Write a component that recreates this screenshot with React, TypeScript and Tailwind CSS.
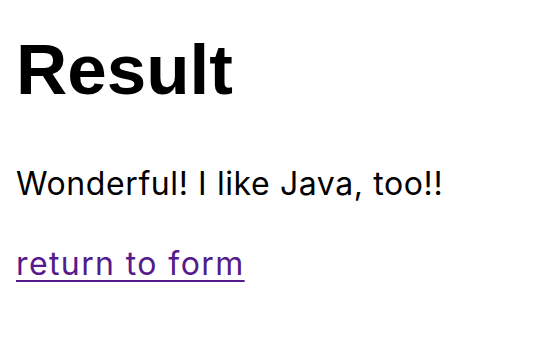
import React from 'react';

export default function App() {
  return (
    <div className="flex min-h-screen flex-col items-start bg-white px-4 pt-[31px] font-['Liberation_Sans',Arial,sans-serif] text-black">
      <h1 className="text-[71px] font-bold leading-[78px]">Result</h1>
      <p className="mt-[57px] font-['Inter','Liberation_Sans',sans-serif] text-[32px] leading-[36px] tracking-[0.6px]">Wonderful! I like Java, too!!</p>
      <p className="mt-[44px] font-['Inter','Liberation_Sans',sans-serif] text-[32px] leading-[36px] tracking-[1.4px]">
        <a href="#" className="text-[#551a8b] underline decoration-2 underline-offset-[5px]">return to form</a>
      </p>
    </div>
  );
}
